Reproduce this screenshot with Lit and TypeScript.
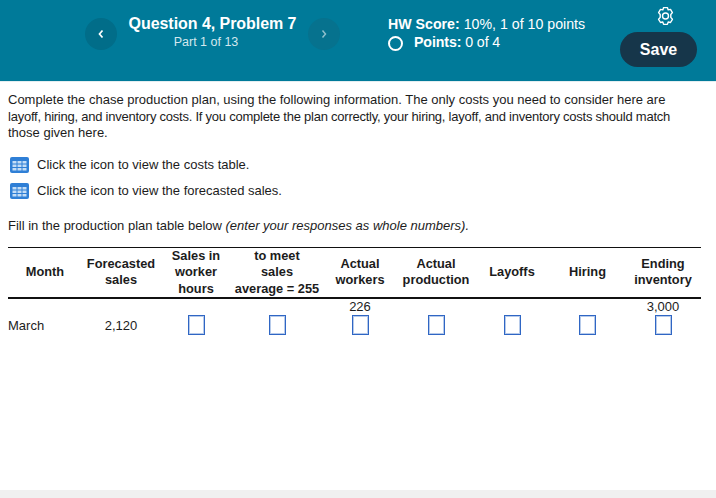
import { LitElement, html, css } from "lit";
import { customElement } from "lit/decorators.js";

const gridIcon = html`<svg class="grid-icon" width="19" height="16" viewBox="0 0 19 16">
  <rect width="19" height="16" rx="2" fill="#2f7fd6"></rect>
  <g fill="#c4ddf6">
    <rect x="2.5" y="4" width="4" height="2.5"></rect><rect x="7.5" y="4" width="4" height="2.5"></rect><rect x="12.5" y="4" width="4" height="2.5"></rect>
    <rect x="2.5" y="7.5" width="4" height="2.5"></rect><rect x="7.5" y="7.5" width="4" height="2.5"></rect><rect x="12.5" y="7.5" width="4" height="2.5"></rect>
    <rect x="2.5" y="11" width="4" height="2.5"></rect><rect x="7.5" y="11" width="4" height="2.5"></rect><rect x="12.5" y="11" width="4" height="2.5"></rect>
  </g>
</svg>`;

@customElement("app-root")
export class AppRoot extends LitElement {
  static styles = css`
    :host { display: flex; flex-direction: column; width: 716px; height: 498px; background: #fff; color: #1c1c1c; font-family: "Liberation Sans", Arial, sans-serif; font-size: 13px; overflow: hidden; }
    .header { height: 81px; flex: none; background: #007a99; color: #fff; display: flex; align-items: flex-start; border-bottom: 1px solid #e4eef1; box-sizing: content-box; }
    .nav { width: 32px; height: 32px; margin-top: 18px; flex: none; border-radius: 50%; background: #016d89; display: flex; align-items: center; justify-content: center; }
    .prev { margin-left: 85px; }
    .nav.next { background: #06728e; }
    .nav.next svg { opacity: .55; }
    .title { width: 191px; flex: none; text-align: center; padding-top: 14px; }
    .title h1 { margin: 0; font-size: 16px; line-height: 20px; font-weight: 700; letter-spacing: -0.05px; }
    .title p { margin: 1px 13px 0 0; font-size: 12.5px; line-height: 15px; color: #d3e8ee; }
    .score { margin-left: 48px; width: 232px; flex: none; padding-top: 15px; font-size: 14.2px; line-height: 18px; }
    .score b { font-weight: 700; }
    .score .points { display: flex; align-items: center; letter-spacing: -0.1px; }
    .ring { width: 11px; height: 11px; border: 2px solid #fff; border-radius: 50%; margin-right: 11px; flex: none; position: relative; top: 1px; }
    .actions { width: 77px; flex: none; display: flex; flex-direction: column; align-items: center; padding-top: 6px; }
    .gear { margin-left: 14px; }
    .save { margin-top: 6px; width: 77px; height: 35px; border: 0; border-radius: 18px; background: #16364a; color: #fff; font: 700 16px "Liberation Sans", Arial, sans-serif; padding: 1px 0 0; }
    .body { flex: 1; padding: 10px 15px 0 8px; }
    .intro { margin: 0; font-size: 13px; line-height: 16.5px; white-space: nowrap; }
    .intro span { display: block; }
    .intro .tight { letter-spacing: -0.24px; }
    .links { margin-top: 14px; display: flex; flex-direction: column; gap: 8px; }
    .link { display: flex; align-items: center; gap: 8px; height: 18px; font-size: 13px; margin-left: 2px; }
    .lead { margin: 18px 0 0; font-size: 13px; line-height: 16px; }
    .lead i { font-style: italic; }
    table { border-collapse: collapse; table-layout: fixed; width: 693px; margin-top: 13px; }
    thead tr { border-top: 1px solid #111; border-bottom: 2px solid #111; }
    th { font-size: 12.8px; line-height: 16.5px; font-weight: 700; padding: 0; height: 49px; text-align: center; vertical-align: middle; }
    td { padding: 0; text-align: center; vertical-align: top; font-size: 13px; }
    .value { display: block; height: 16px; line-height: 16px; }
    .first { text-align: left; }
    .cell { display: flex; flex-direction: column; align-items: center; height: 36px; }
    .plain { padding-top: 19px; line-height: 15px; }
    .box { width: 15px; height: 18px; border: 1px solid #2f66c4; box-shadow: inset 0 0 0 1px rgba(47, 102, 196, .35); display: block; flex: none; box-sizing: content-box; background: #fff; }
    .spacer { height: 16px; flex: none; }
    .w1 { width: 74px; } .w2 { width: 78px; } .w3 { width: 72px; } .w4 { width: 90px; }
    .w5 { width: 76px; } .w6 { width: 76px; } .w7 { width: 76px; } .w8 { width: 75px; } .w9 { width: 76px; }
    .footer { height: 8px; background: #f0f0f0; flex: none; }
  `;

  private cell(value = "") {
    return html`<td><div class="cell">${value ? html`<span class="value">${value}</span>` : html`<span class="spacer"></span>`}<span class="box"></span></div></td>`;
  }

  render() {
    return html`
      <header class="header">
        <div class="nav prev"><svg width="8" height="10" viewBox="0 0 8 10"><path d="M5.5 1.5 2.5 5l3 3.5" fill="none" stroke="#fff" stroke-width="1.7"></path></svg></div>
        <div class="title"><h1>Question 4, Problem 7</h1><p>Part 1 of 13</p></div>
        <div class="nav next"><svg width="8" height="10" viewBox="0 0 8 10"><path d="M2.5 1.5 5.5 5l-3 3.5" fill="none" stroke="#fff" stroke-width="1.5"></path></svg></div>
        <div class="score">
          <div><b>HW Score:</b> 10%, 1 of 10 points</div>
          <div class="points"><span class="ring"></span><span><b>Points:</b> 0 of 4</span></div>
        </div>
        <div class="actions">
          <svg class="gear" width="19" height="20" viewBox="0 0 19 20" fill="none" stroke="#fff" stroke-width="1.4">
            <path d="M7.6 1.6h3.8l.8 2.3 2.3-.5 1.9 3.2-1.6 1.9v2.9l1.6 1.9-1.9 3.2-2.3-.5-.8 2.4H7.6l-.8-2.4-2.3.5-1.9-3.2 1.6-1.9V8.5L2.6 6.6l1.9-3.2 2.3.5z" stroke-linejoin="round"></path>
            <circle cx="9.5" cy="10" r="3"></circle>
          </svg>
          <button class="save">Save</button>
        </div>
      </header>
      <main class="body">
        <p class="intro">
          <span>Complete the chase production plan, using the following information. The only costs you need to consider here are</span>
          <span class="tight">layoff, hiring, and inventory costs. If you complete the plan correctly, your hiring, layoff, and inventory costs should match</span>
          <span>those given here.</span>
        </p>
        <div class="links">
          <div class="link">${gridIcon}<span>Click the icon to view the costs table.</span></div>
          <div class="link">${gridIcon}<span>Click the icon to view the forecasted sales.</span></div>
        </div>
        <p class="lead">Fill in the production plan table below <i>(enter your responses as whole numbers).</i></p>
        <table>
          <colgroup><col class="w1"><col class="w2"><col class="w3"><col class="w4"><col class="w5"><col class="w6"><col class="w7"><col class="w8"><col class="w9"></colgroup>
          <thead><tr>
            <th>Month</th><th>Forecasted<br>sales</th><th>Sales in<br>worker<br>hours</th><th>to meet<br>sales<br>average = 255</th>
            <th>Actual<br>workers</th><th>Actual<br>production</th><th>Layoffs</th><th>Hiring</th><th>Ending<br>inventory</th>
          </tr></thead>
          <tbody><tr>
            <td class="first plain">March</td><td class="plain">2,120</td>
            ${this.cell()}${this.cell()}${this.cell("226")}${this.cell()}${this.cell()}${this.cell()}${this.cell("3,000")}
          </tr></tbody>
        </table>
      </main>
      <div class="footer"></div>
    `;
  }
}
